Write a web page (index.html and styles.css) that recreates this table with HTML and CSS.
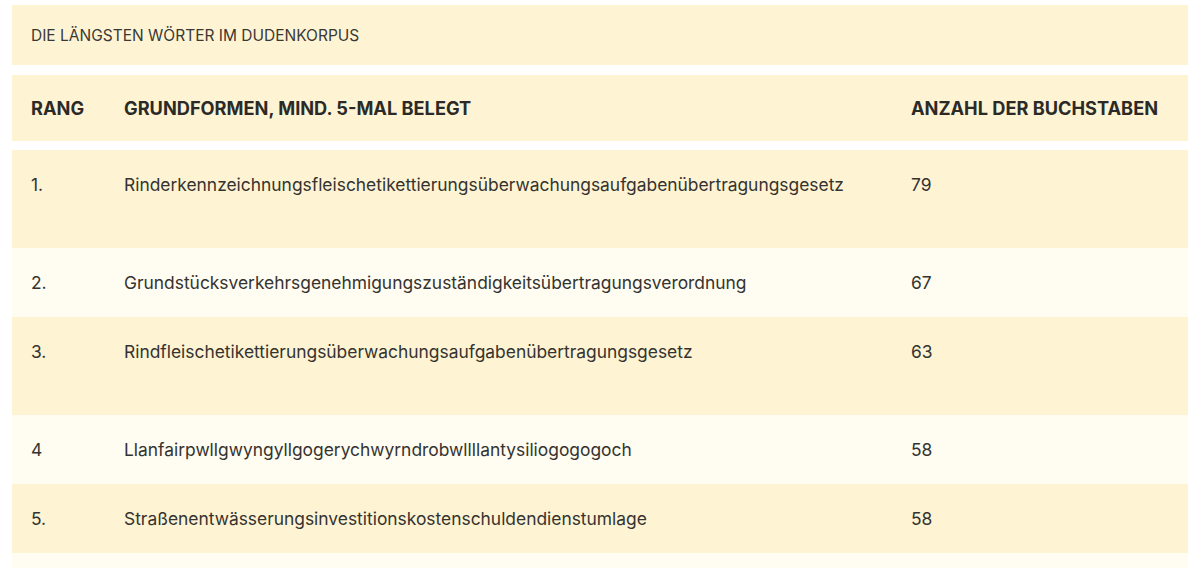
FILE: index.html
```html
<!DOCTYPE html>
<html lang="de">
<head>
<meta charset="utf-8">
<link rel="stylesheet" href="styles.css">
</head>
<body>
<div class="page">
  <div class="caption">DIE LÄNGSTEN WÖRTER IM DUDENKORPUS</div>
  <div class="row head">
    <div class="c1">RANG</div>
    <div class="c2">GRUNDFORMEN, MIND. 5-MAL BELEGT</div>
    <div class="c3">ANZAHL DER BUCHSTABEN</div>
  </div>
  <div class="rows">
    <div class="row odd tall">
      <div class="c1">1.</div>
      <div class="c2">Rinderkennzeichnungsfleischetikettierungsüberwachungsaufgabenübertragungsgesetz</div>
      <div class="c3">79</div>
    </div>
    <div class="row even">
      <div class="c1">2.</div>
      <div class="c2">Grundstücksverkehrsgenehmigungszuständigkeitsübertragungsverordnung</div>
      <div class="c3">67</div>
    </div>
    <div class="row odd tall">
      <div class="c1">3.</div>
      <div class="c2">Rindfleischetikettierungsüberwachungsaufgabenübertragungsgesetz</div>
      <div class="c3">63</div>
    </div>
    <div class="row even">
      <div class="c1">4</div>
      <div class="c2">Llanfairpwllgwyngyllgogerychwyrndrobwllllantysiliogogogoch</div>
      <div class="c3">58</div>
    </div>
    <div class="row odd">
      <div class="c1">5.</div>
      <div class="c2">Straßenentwässerungsinvestitionskostenschuldendienstumlage</div>
      <div class="c3">58</div>
    </div>
    <div class="row even rest"></div>
  </div>
</div>
</body>
</html>
```
FILE: styles.css
```css
html, body {
  margin: 0;
  padding: 0;
  background: #ffffff;
}
body {
  font-family: Inter, "Liberation Sans", Arial, sans-serif;
  color: #353330;
  overflow: hidden;
  height: 568px;
}
.page {
  padding: 5px 12px 0 12px;
}
.caption {
  background: #fef4d4;
  height: 60px;
  display: flex;
  align-items: center;
  padding: 0 19px;
  font-size: 15.5px;
  color: #3a3834;
  margin-bottom: 10px;
}
.row {
  display: grid;
  grid-template-columns: 93px 787px 1fr;
  padding: 0 19px;
  align-items: start;
  font-size: 17.4px;
  line-height: 21px;
}
.head {
  background: #fef4d4;
  height: 66px;
  align-items: center;
  font-weight: bold;
  font-size: 18.2px;
  color: #2b2a27;
  margin-bottom: 9px;
}
.rows .row {
  padding-top: 24px;
  padding-bottom: 24px;
  height: 21px;
}
.rows .row.tall {
  padding-bottom: 53px;
}
.odd {
  background: #fef4d4;
}
.even {
  background: #fffcf2;
}
.rows .row.rest {
  height: 40px;
  padding: 0;
}
```
